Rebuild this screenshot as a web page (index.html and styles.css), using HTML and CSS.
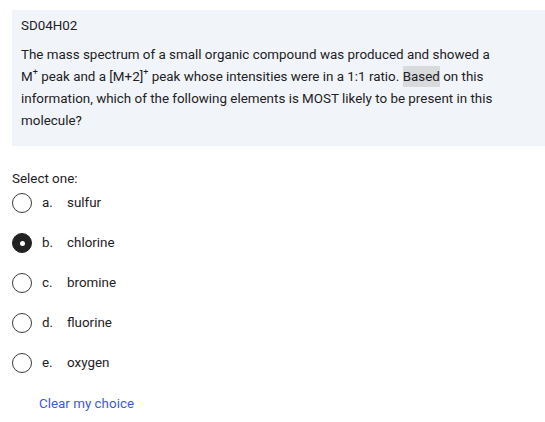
FILE: index.html
```html
<!doctype html>
<html>

<head>
  <meta charset="utf-8">
  <title>Question</title>
  <link rel="stylesheet" href="styles.css">
</head>

<body>
  <div class="formulation">
    <div class="qtitle">SD04H02</div>
    <p class="qtext">The mass spectrum of a small organic compound was produced and showed a
      M<sup>+</sup> peak and a [M+2]<sup>+</sup> peak whose intensities were in a 1:1 ratio. <span class="hl">Based</span> on this
      information, which of the following elements is MOST likely to be present in this molecule?</p>
  </div>

  <div class="ablock">
    <div class="prompt">Select one:</div>
    <div class="answer">
      <div class="row">
        <span class="radio"></span>
        <span class="num">a.</span>
        <span class="label">sulfur</span>
      </div>
      <div class="row">
        <span class="radio checked"></span>
        <span class="num">b.</span>
        <span class="label">chlorine</span>
      </div>
      <div class="row">
        <span class="radio"></span>
        <span class="num">c.</span>
        <span class="label">bromine</span>
      </div>
      <div class="row">
        <span class="radio"></span>
        <span class="num">d.</span>
        <span class="label">fluorine</span>
      </div>
      <div class="row">
        <span class="radio"></span>
        <span class="num">e.</span>
        <span class="label">oxygen</span>
      </div>
    </div>
    <a class="clear" href="#">Clear my choice</a>
  </div>
</body>

</html>
```

FILE: styles.css
```css
body {
  margin: 0;
  font-family: Roboto, "Liberation Sans", sans-serif;
  font-size: 13.4px;
  line-height: 22px;
  color: #1d2125;
  background-color: #fff;
}

.formulation {
  margin: 10px 0 0 12px;
  padding: 5px 45px 14px 9px;
  background-color: #f1f5f9;
}

.qtitle {
  margin-bottom: 7px;
}

.qtext {
  margin: 0;
}

.qtext sup {
  font-size: 9px;
  line-height: 0;
  vertical-align: 6px;
}

.hl {
  background-color: #d9dadb;
  padding: 3px 0 3px 0;
}

.ablock {
  margin: 22px 0 0 12px;
}

.prompt {
  margin-bottom: -2px;
}

.answer {
  display: flex;
  flex-direction: column;
  gap: 10px;
}

.row {
  display: flex;
  align-items: center;
  height: 30px;
}

.radio {
  width: 18px;
  height: 18px;
  border: 1px solid #3a3a3a;
  border-radius: 50%;
  margin-right: 10px;
  position: relative;
}

.radio.checked {
  background-color: #222;
  border-color: #222;
}

.radio.checked::after {
  content: "";
  position: absolute;
  left: 6.5px;
  top: 6.5px;
  width: 5px;
  height: 5px;
  border-radius: 50%;
  background-color: #fff;
}

.num {
  width: 25px;
}

.clear {
  display: inline-block;
  margin: 15px 0 0 27px;
  color: #3d5bd6;
  text-decoration: none;
}
```
